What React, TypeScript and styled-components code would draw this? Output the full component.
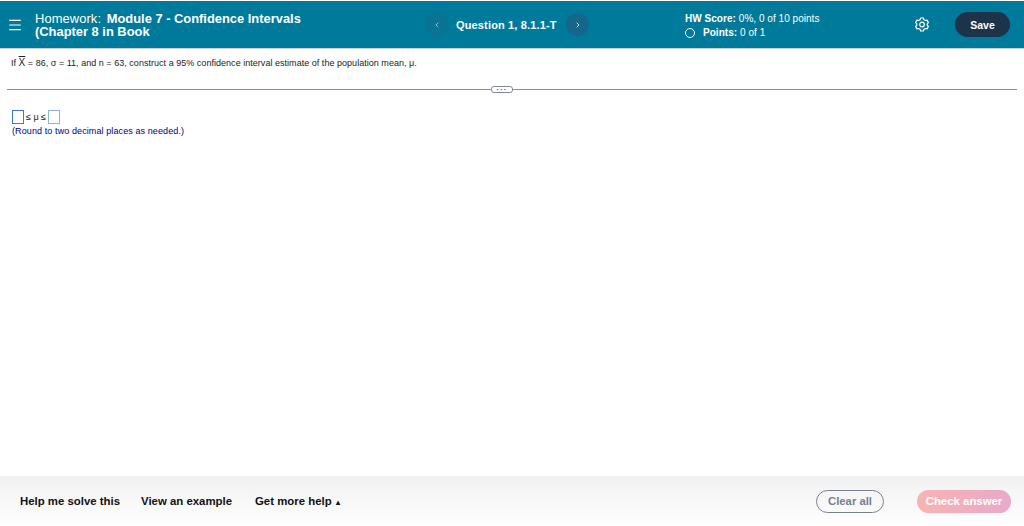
import {Menu, ChevronLeft, ChevronRight} from 'lucide-react'
import styled, {createGlobalStyle} from 'styled-components'

const GlobalStyle = createGlobalStyle`
  html, body, #root {
    margin: 0;
    height: 100%;
  }

  body {
    background: #fff;
    font-family: 'Liberation Sans', Arial, sans-serif;
    overflow: hidden;
  }
`

function GearIcon() {
  return (
    <svg width="14" height="15" viewBox="0 0 14 15" fill="none" stroke="#fff" strokeWidth="1.2">
      <path d="M5.6 1h2.8l.5 1.7 1.4.8 1.7-.4 1.4 2.4-1.2 1.300v1.400l1.200 1.300-1.400 2.400-1.700-.4-1.400.8-.5 1.700H5.600l-.5-1.700-1.400-.8-1.700.4L.6 9.500l1.200-1.300V6.800L.6 5.500 2 3.100l1.700.4 1.400-.8z" strokeLinejoin="round" />
      <circle cx="7" cy="7.500" r="2.300" />
    </svg>
  )
}

export default function App() {
  return (
    <Page>
      <GlobalStyle />
      <Header>
        <TitleGroup>
          <MenuButton>
            <Menu size={16} strokeWidth={1.8} />
          </MenuButton>
          <Title>
            <span>Homework:</span> <strong>Module 7 - Confidence Intervals</strong>
            <br />
            <strong>(Chapter 8 in Book</strong>
          </Title>
        </TitleGroup>
        <QuestionNav>
          <NavButton $active={false}>
            <ChevronLeft size={8} strokeWidth={2} />
          </NavButton>
          <QuestionLabel>Question 1, 8.1.1-T</QuestionLabel>
          <NavButton $active>
            <ChevronRight size={8} strokeWidth={2.500} />
          </NavButton>
        </QuestionNav>
        <Score>
          <ScoreRow>
            <strong>HW Score:</strong> 0%, 0 of 10 points
          </ScoreRow>
          <ScoreRow>
            <Ring />
            <strong>Points:</strong> 0 of 1
          </ScoreRow>
        </Score>
        <Actions>
          <GearIcon />
          <SaveButton>Save</SaveButton>
        </Actions>
      </Header>

      <Main>
        <Prompt>
          If <Overline>X</Overline> = 86, σ = 11, and n = 63, construct a 95% confidence interval
          estimate of the population mean, μ.
        </Prompt>
        <Divider>
          <Handle>···</Handle>
        </Divider>
        <AnswerRow>
          <AnswerBox />
          <Relation>≤ μ ≤</Relation>
          <AnswerBox />
        </AnswerRow>
        <Hint>(Round to two decimal places as needed.)</Hint>
      </Main>

      <Footer>
        <HelpLinks>
          <HelpLink>Help me solve this</HelpLink>
          <HelpLink>View an example</HelpLink>
          <HelpLink>
            Get more help <Caret>▴</Caret>
          </HelpLink>
        </HelpLinks>
        <FooterActions>
          <ClearButton>Clear all</ClearButton>
          <CheckButton>Check answer</CheckButton>
        </FooterActions>
      </Footer>
    </Page>
  )
}

const Page = styled.div`
  height: 100%;
  display: flex;
  flex-direction: column;
`

const Header = styled.header`
  height: 47px;
  margin-top: 1px;
  flex: none;
  display: flex;
  align-items: center;
  background: #007a9a;
  color: #fff;
  border-bottom: 1px solid #c9d3d8;
`

const TitleGroup = styled.div`
  width: 425px;
  flex: none;
  display: flex;
  align-items: center;
  padding-left: 7px;
  box-sizing: border-box;
`

const MenuButton = styled.div`
  width: 28px;
  display: flex;
  color: #fff;
`

const Title = styled.div`
  font-size: 12.900px;
  line-height: 13px;

  span {
    letter-spacing: 0.1px;
    margin-right: 2px;
  }

  strong {
    font-weight: 700;
  }
`

const QuestionNav = styled.div`
  width: 260px;
  flex: none;
  display: flex;
  align-items: center;
`

const NavButton = styled.div<{$active: boolean}>`
  width: 23px;
  height: 23px;
  border-radius: 50%;
  display: flex;
  align-items: center;
  justify-content: center;
  background: ${p => (p.$active ? '#14678a' : '#0a7292')};
  color: ${p => (p.$active ? '#fff' : '#cfe4ea')};
`

const QuestionLabel = styled.div`
  width: 118px;
  padding-left: 8px;
  box-sizing: border-box;
  font-size: 11px;
  font-weight: 700;
  letter-spacing: 0.15px;
  white-space: nowrap;
`

const Score = styled.div`
  width: 230px;
  flex: none;
  margin-top: 2px;
  font-size: 10px;
  line-height: 14px;
  letter-spacing: 0.03px;
`

const ScoreRow = styled.div`
  display: flex;
  align-items: center;
  gap: 3px;
  white-space: nowrap;
`

const Ring = styled.span`
  width: 8px;
  height: 8px;
  border: 1.500px solid #fff;
  border-radius: 50%;
  margin-right: 5px;
`

const Actions = styled.div`
  flex: 1;
  display: flex;
  align-items: center;
  justify-content: space-between;
  padding-right: 14px;
`

const SaveButton = styled.div`
  width: 55px;
  height: 25px;
  border-radius: 13px;
  background: #1d3349;
  display: flex;
  align-items: center;
  justify-content: center;
  font-size: 10.500px;
  font-weight: 700;
`

const Main = styled.main`
  flex: 1;
  min-height: 0;
`

const Prompt = styled.p`
  margin: 7px 0 0 11px;
  height: 13px;
  font-size: 9px;
  line-height: 13px;
  letter-spacing: 0.03px;
  color: #222;
`

const Overline = styled.span`
  text-decoration: overline;
  font-size: 10px;
`

const Divider = styled.div`
  margin: 20px 7px 0;
  height: 1px;
  background: #8a9199;
  display: flex;
  justify-content: center;
  align-items: center;
`

const Handle = styled.div`
  width: 22px;
  height: 7px;
  box-sizing: border-box;
  border: 1px solid #7f8a99;
  border-radius: 3px;
  background: #fff;
  font-size: 8px;
  font-weight: 700;
  line-height: 5px;
  letter-spacing: 1px;
  text-align: center;
  color: #555;
  margin-right: 20px;
`

const AnswerRow = styled.div`
  margin: 20px 0 0 12px;
  display: flex;
  align-items: center;
`

const AnswerBox = styled.div`
  width: 12px;
  height: 14px;
  box-sizing: border-box;
  border: 1px solid #3c78d8;
  background: #fff;
  &:last-child {
    border-color: #8fb0e6;
  }
`

const Relation = styled.span`
  width: 24px;
  text-align: center;
  font-size: 9px;
  color: #222;
`

const Hint = styled.div`
  margin: 2px 0 0 12px;
  font-size: 9px;
  line-height: 11px;
  letter-spacing: 0.1px;
  color: #000080;
`

const Footer = styled.footer`
  height: 50px;
  flex: none;
  display: flex;
  align-items: center;
  justify-content: space-between;
  padding: 0 13px 0 20px;
  background: linear-gradient(#f1f1f1, #fff);
`

const HelpLinks = styled.div`
  display: flex;
  gap: 21px;
`

const HelpLink = styled.div`
  font-size: 11.400px;
  font-weight: 700;
  color: #111;

  &:last-child {
    margin-left: 2px;
  }
`

const Caret = styled.span`
  font-size: 8px;
  margin-left: 1px;
`

const FooterActions = styled.div`
  display: flex;
  align-items: center;
  gap: 33px;
`

const ClearButton = styled.div`
  width: 68px;
  height: 23px;
  box-sizing: border-box;
  border: 1px solid #78808f;
  border-radius: 12px;
  display: flex;
  align-items: center;
  justify-content: center;
  font-size: 11.300px;
  font-weight: 700;
  color: #78808f;
`

const CheckButton = styled.div`
  width: 94px;
  height: 23px;
  border-radius: 12px;
  display: flex;
  align-items: center;
  justify-content: center;
  background: linear-gradient(90deg, #f8b3b3, #e9a9ca);
  color: #fff;
  font-size: 11.400px;
  font-weight: 700;
`
